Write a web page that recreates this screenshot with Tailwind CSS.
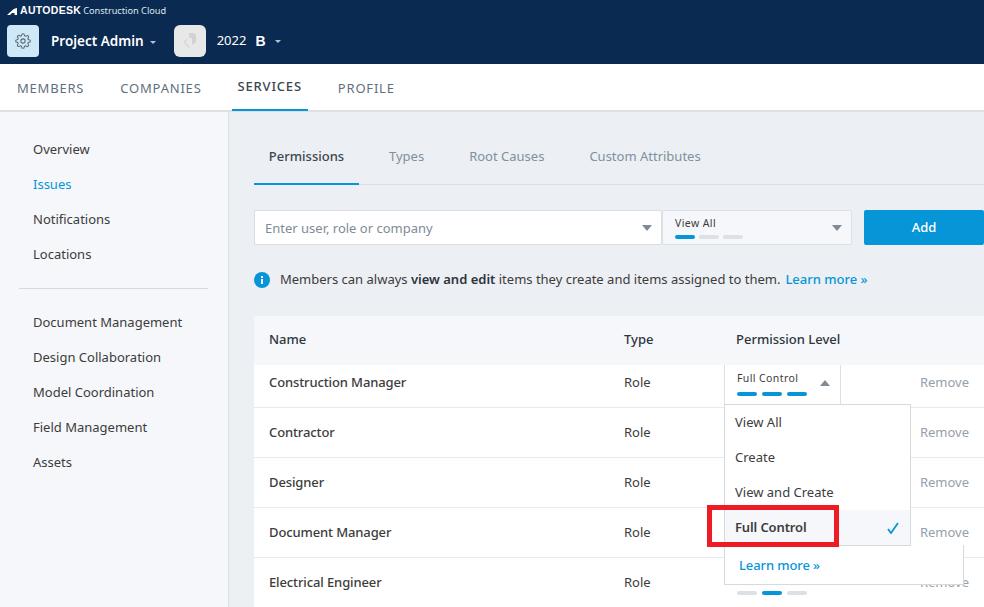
<!DOCTYPE html>
<html><head><meta charset="utf-8"><script src="https://cdn.jsdelivr.net/npm/@tailwindcss/browser@4"></script></head>
<body class="w-[984px] h-[607px] overflow-hidden font-['Noto_Sans',sans-serif] text-[13px] text-[#3c3c3c] bg-white">
<header class="h-[64px] bg-[#0b2a52] text-white flex flex-col">
  <div class="h-[25px] pl-[7px] flex items-center gap-[3px] pb-[3px]">
    <svg width="10" height="7" viewBox="0 0 10 7"><path d="M0 7 5.500 2Q7 .5 10 0v7H7.500V5H5L3 7z" fill="#fff"/></svg>
    <span class="font-['Liberation_Sans',sans-serif] font-bold text-[10.500px] tracking-[0.3px]">AUTODESK</span>
    <span class="text-[9.2px] leading-none -ml-[1px] text-[#dfe6ee]">Construction Cloud</span>
  </div>
  <div class="flex items-center h-[32px] pl-[7px]">
    <div class="w-[32px] h-[32px] rounded-[4px] bg-[#cde9f7] flex items-center justify-center">
      <svg width="16" height="16" viewBox="0 0 24 24" fill="none" stroke="#5a6b7b" stroke-width="1.6"><circle cx="12" cy="12" r="3.2"/><path d="M19.4 15a1.7 1.7 0 0 0 .3 1.8l.1.1a2 2 0 1 1-2.9 2.9l-.1-.1a1.7 1.7 0 0 0-2.8 1.200V21a2 2 0 1 1-4 0v-.1a1.700 1.700 0 0 0-2.900-1.200l-.1.1a2 2 0 1 1-2.800-2.900l.1-.1a1.700 1.700 0 0 0-1.200-2.800H3a2 2 0 1 1 0-4h.1a1.700 1.700 0 0 0 1.200-2.900l-.1-.1a2 2 0 1 1 2.900-2.800l.1.1a1.700 1.700 0 0 0 2.800-1.200V3a2 2 0 1 1 4 0v.1a1.700 1.700 0 0 0 2.900 1.200l.1-.1a2 2 0 1 1 2.800 2.900l-.1.1a1.700 1.700 0 0 0 1.200 2.800h.1a2 2 0 1 1 0 4h-.1a1.700 1.700 0 0 0-1.500 1z"/></svg>
    </div>
    <span class="ml-[12px] text-[13.500px] font-semibold">Project Admin</span>
    <span class="ml-[6px] mt-[2px] w-0 h-0 border-x-[3px] border-x-transparent border-t-[3px] border-t-[#b8c2cd]"></span>
    <div class="ml-[18px] w-[32px] h-[32px] rounded-[6px] bg-[#e8e8e8] flex items-center justify-center">
      <svg width="16" height="18" viewBox="0 0 16 18"><path d="M7 1h5l2 2v7l-4 3V6H7z" fill="#d2d2d2"/><path d="M1 10l4-3 1 1-3 2 5 5-1 1z" fill="#d6d6d6"/></svg>
    </div>
    <span class="ml-[11px] text-[13px]">2022</span>
    <span class="ml-[9px] text-[14px] font-bold font-['Liberation_Sans',sans-serif]">B</span>
    <span class="ml-[9px] w-0 h-0 border-x-[3px] border-x-transparent border-t-[3px] border-t-[#b8c2cd]"></span>
  </div>
</header>
<nav class="h-[48px] border-b-2 border-[#dde1e6] flex pl-[17px] gap-[36px] text-[13px] tracking-[0.8px] text-[#5f6f80]">
  <a class="h-[48px] flex items-center pt-[2px]">MEMBERS</a>
  <a class="h-[48px] flex items-center pt-[2px]">COMPANIES</a>
  <a class="h-[47px] -mx-[6px] px-[6px] flex items-center pt-[1px] font-medium text-[#3c4650] border-b-2 border-[#0696d7]">SERVICES</a>
  <a class="h-[48px] flex items-center pt-[2px]">PROFILE</a>
</nav>
<div class="flex h-[495px]">
  <aside class="w-[229px] shrink-0 bg-[#f5f7fa] border-r border-[#dde1e6] pl-[19px] pt-[20px]">
    <ul class="pl-[14px] leading-[35px]">
      <li>Overview</li><li class="text-[#0696d7]">Issues</li><li>Notifications</li><li>Locations</li>
    </ul>
    <div class="w-[189px] border-t border-[#d5d9de] mt-[16px] mb-[16px]"></div>
    <ul class="pl-[14px] leading-[35px]">
      <li>Document Management</li><li>Design Collaboration</li><li>Model Coordination</li><li>Field Management</li><li>Assets</li>
    </ul>
  </aside>
  <main class="relative flex-1 min-w-0 bg-[#eceff3] pl-[25px] overflow-hidden">
    <div class="h-[73px] flex border-b border-[#d9dee3] w-[730px] text-[#80909e]">
      <div class="h-[73px] w-[105px] border-b-2 border-[#0696d7] flex items-center justify-center pt-[18px] text-[#3c4650] font-medium">Permissions</div>
      <div class="pl-[30px] flex items-center pt-[18px]">Types</div>
      <div class="pl-[45px] flex items-center pt-[18px]">Root Causes</div>
      <div class="pl-[45px] flex items-center pt-[18px]">Custom Attributes</div>
    </div>
    <div class="flex mt-[25px] w-[730px] h-[35px]">
      <div class="w-[408px] bg-white border border-[#d9dee3] rounded-[2px] flex items-center pl-[10px] pr-[9px] text-[#7e8b97]">
        <span class="flex-1 pt-[2px]">Enter user, role or company</span>
        <span class="w-0 h-0 border-x-[5px] border-x-transparent border-t-[6px] border-t-[#808b95]"></span>
      </div>
      <div class="w-[190px] bg-[#f5f7fa] border border-[#dde1e6] rounded-[2px] flex items-center pl-[12px] pr-[9px]">
        <div class="flex-1">
          <div class="text-[10.500px] leading-[14px] mb-[5px] tracking-[0.4px]">View All</div>
          <div class="flex gap-[4px]"><i class="w-[20px] h-[4px] rounded-full bg-[#0696d7]"></i><i class="w-[20px] h-[4px] rounded-full bg-[#dce1e6]"></i><i class="w-[20px] h-[4px] rounded-full bg-[#dce1e6]"></i></div>
        </div>
        <span class="w-0 h-0 border-x-[5px] border-x-transparent border-t-[6px] border-t-[#808b95]"></span>
      </div>
      <button class="ml-[12px] w-[120px] bg-[#0696d7] text-white font-medium rounded-[2px]">Add</button>
    </div>
    <div class="flex items-center mt-[25px] h-[20px]">
      <svg width="16" height="16" viewBox="0 0 16 16"><circle cx="8" cy="8" r="8" fill="#0696d7"/><rect x="7" y="7" width="2" height="5" fill="#fff"/><rect x="7" y="4" width="2" height="2" fill="#fff"/></svg>
      <p class="ml-[10px] whitespace-nowrap">Members can always <b class="font-semibold text-[#2e353c]">view and edit</b> items they create and items assigned to them.<a class="ml-[5px] text-[#0696d7] font-medium">Learn more »</a></p>
    </div>
    <div class="mt-[26px] w-[730px]">
      <div class="h-[49px] bg-[#f5f7fa] flex items-center pl-[15px] pb-[2px] font-medium text-[#2e353c]">
        <span class="w-[355px]">Name</span><span class="w-[112px]">Type</span><span>Permission Level</span>
      </div>
      <div class="h-[43px] bg-white border-b border-[#e6e9ed] flex items-center pl-[15px] pr-[15px] pb-[7px]">
        <span class="w-[355px] font-medium tracking-[-0.12px]">Construction Manager</span><span class="w-[100px]">Role</span>
        <div class="w-[117px] h-[40px] self-start border-x border-[#dde1e6] pl-[12px] pr-[10px] pt-[6px] flex items-start">
          <div class="flex-1"><div class="text-[10.500px] leading-[14px] mb-[7px] tracking-[0.4px]">Full Control</div><div class="flex gap-[5px]"><i class="w-[20px] h-[4px] rounded-full bg-[#0696d7]"></i><i class="w-[20px] h-[4px] rounded-full bg-[#0696d7]"></i><i class="w-[20px] h-[4px] rounded-full bg-[#0696d7]"></i></div></div>
          <span class="mt-[9px] w-0 h-0 border-x-[5px] border-x-transparent border-b-[6px] border-b-[#808b95]"></span>
        </div>
        <span class="flex-1 text-right text-[#95a0aa]">Remove</span>
      </div>
      <div class="h-[50px] bg-white border-b border-[#e6e9ed] flex items-center px-[15px]"><span class="w-[355px] font-medium tracking-[-0.12px]">Contractor</span><span class="flex-1">Role</span><span class="text-[#95a0aa]">Remove</span></div>
      <div class="h-[50px] bg-white border-b border-[#e6e9ed] flex items-center px-[15px]"><span class="w-[355px] font-medium tracking-[-0.12px]">Designer</span><span class="flex-1">Role</span><span class="text-[#95a0aa]">Remove</span></div>
      <div class="h-[50px] bg-white border-b border-[#e6e9ed] flex items-center px-[15px]"><span class="w-[355px] font-medium tracking-[-0.12px]">Document Manager</span><span class="flex-1">Role</span><span class="text-[#95a0aa]">Remove</span></div>
      <div class="h-[50px] bg-white border-b border-[#e6e9ed] flex items-center px-[15px]"><span class="w-[355px] font-medium tracking-[-0.12px]">Electrical Engineer</span><span class="flex-1">Role</span><span class="text-[#95a0aa]">Remove</span></div>
    </div>
    <div class="absolute left-[508px] top-[479px] flex gap-[5px]"><i class="w-[20px] h-[4px] rounded-full bg-[#dce1e6]"></i><i class="w-[20px] h-[4px] rounded-full bg-[#0696d7]"></i><i class="w-[20px] h-[4px] rounded-full bg-[#dce1e6]"></i></div>
    <div class="absolute left-[495px] top-[433px] w-[240px] h-[40px] bg-white border-l border-b border-r border-[#d5dade]"></div>
    <div class="absolute left-[495px] top-[292px] w-[187px] h-[142px] bg-white border border-[#d5dade]">
      <div class="h-[35px] pl-[10px] flex items-center">View All</div>
      <div class="h-[35px] pl-[10px] flex items-center">Create</div>
      <div class="h-[35px] pl-[10px] flex items-center">View and Create</div>
      <div class="h-[35px] pl-[10px] pr-[11px] flex items-center justify-between bg-[#f5f7fa] font-semibold tracking-[-0.12px]">Full Control
        <svg width="12" height="12" viewBox="0 0 12 12" fill="none" stroke="#0696d7" stroke-width="1.800"><path d="M1 7l3 4 7-10"/></svg></div>
    </div>
    <a class="absolute left-[510px] top-[444px] text-[#0696d7] font-medium tracking-[-0.1px]">Learn more »</a>
    <div class="absolute left-[478px] top-[393px] w-[132px] h-[42px] border-[5px] border-[#ed1c24]"></div>
  </main>
</div>
</body></html>
